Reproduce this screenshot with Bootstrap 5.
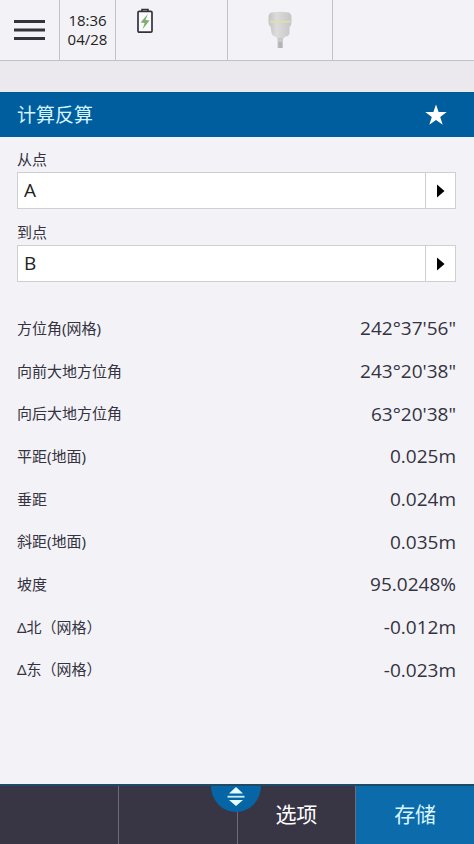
<!DOCTYPE html>
<html lang="zh-CN">
<head>
<meta charset="utf-8">
<meta name="viewport" content="width=device-width, initial-scale=1">
<title>计算反算</title>
<link href="https://cdn.jsdelivr.net/npm/bootstrap@5.3.0/dist/css/bootstrap.min.css" rel="stylesheet">
<style>
  body { font-family: "Open Sans", "Noto Sans CJK SC", sans-serif; background: #f3f2f7; color: #34333f; }
  button { border: 0; background: transparent; padding: 0; color: inherit; }
  svg { display: block; }
  .status-bar { height: 61px; border-bottom: 1px solid #c3c2c7; }
  .status-cell { border-right: 1px solid #c3c2c7; }
  .cell-menu { flex: 0 0 60px; }
  .cell-clock { flex: 0 0 56px; font-size: 15px; line-height: 19px; color: #222; }
  .cell-power { flex: 0 0 112px; padding: 8px 0 0 20px; }
  .cell-antenna { flex: 0 0 105px; padding-top: 11px; }
  .notice-strip { height: 31px; background: #ebe9ee; }
  .title-bar { height: 45px; padding: 0 27px 0 17px; background: #005e9e; border-top: 1px solid #005a86; color: #d6f4ff; }
  .title-bar h1 { font-size: 19px; line-height: 28px; }
  .page-body { padding: 12px 18px 0 17px; }
  .point-label { font-size: 15px; line-height: 20px; margin-bottom: 3px; }
  .point-field { height: 37px; border: 1px solid #cfced3; background: #fff; margin-bottom: 13px; }
  .point-field input { border: 0; min-width: 0; padding: 0 6px; font-size: 19px; color: #222; background: transparent; outline-offset: -1px; }
  .point-field button { flex: 0 0 30px; border-left: 1px solid #cfced3; }
  .results { min-height: 384px; margin-top: 25px; }
  .results dt { font-family: "Noto Sans", "Noto Sans CJK SC", sans-serif; font-size: 15px; font-weight: 400; }
  .results dd { font-size: 19px; line-height: 28px; }
  .softkeys { height: 60px; background: #383545; border-top: 2px solid #1f4a66; color: #fff; font-size: 21px; }
  .softkeys .softkey { flex: 1 1 0; border-right: 1px solid #6d6b77; }
  .softkeys .softkey-store { background: #0c6bab; border-right: 0; color: #d9f6ff; }
  .drawer-handle { left: 50%; top: 0; width: 50px; height: 26px; margin-left: -26px; }
</style>
<script src="https://cdn.jsdelivr.net/npm/bootstrap@5.3.0/dist/js/bootstrap.bundle.min.js"></script>
</head>
<body>
<div class="d-flex flex-column min-vh-100">
  <header>
    <div class="status-bar d-flex">
      <button type="button" class="status-cell cell-menu d-flex align-items-center justify-content-center" aria-label="菜单">
        <svg width="32" height="22" viewBox="0 0 32 22"><path d="M0 2.500h31M0 11h31M0 19.500h31" stroke="#34333c" stroke-width="3"/></svg>
      </button>
      <div class="status-cell cell-clock d-flex flex-column align-items-center justify-content-center">
        <span>18:36</span><span>04/28</span>
      </div>
      <div class="status-cell cell-power">
        <svg width="18" height="26" viewBox="0 0 18 26">
          <path d="M6 3V1.500h6V3" fill="none" stroke="#33323a" stroke-width="1.600"/>
          <rect x="2" y="3.400" width="14" height="20.800" rx="1.200" fill="#fafafc" stroke="#33323a" stroke-width="1.700"/>
          <path d="M11.800 6L4.600 14.400l4 .6-2 6.200 7-8.600-4-.6z" fill="#82ad74"/>
        </svg>
      </div>
      <div class="status-cell cell-antenna d-flex justify-content-center">
        <svg width="26" height="38" viewBox="0 0 26 38">
          <defs>
            <linearGradient id="shell"><stop offset="0" stop-color="#c4c4c4"/><stop offset=".35" stop-color="#dcdcdc"/><stop offset="1" stop-color="#c6c6c8"/></linearGradient>
          </defs>
          <path d="M4.500 1.500Q13 .2 21.500 1.500 24.300 2 24.500 6v6q-.4 3-2 4v6q0 3-4.500 3.800l-1.500 1.700h-6.500l-1.500-1.800q-3.500-1-4-4.200l-1-6q-2-1-2-4V6q0-4 3-4.500z" fill="url(#shell)"/>
          <path d="M3 10.400q10 .9 20.500 0" stroke="#e1e2a2" stroke-width="1.500" fill="none"/>
          <path d="M10.500 27h5.500v10h-5.500z" fill="#c9c9ca"/>
          <path d="M11.500 31h3.500v6h-3.500z" fill="#b3b3b5"/>
        </svg>
      </div>
    </div>
    <div class="notice-strip"></div>
    <div class="title-bar d-flex align-items-center justify-content-between">
      <h1 class="m-0 fw-normal">计算反算</h1>
      <button type="button" aria-label="收藏">
        <svg width="22" height="22" viewBox="0 0 22 22"><path d="M11 .5l2.600 7.600h8.100l-6.500 4.800 2.500 7.800L11 16l-6.700 4.700 2.500-7.800L.3 8.100h8.100z" fill="#fff"/></svg>
      </button>
    </div>
  </header>

  <main class="page-body flex-grow-1">
    <form>
      <label class="point-label d-block" for="from-point">从点</label>
      <div class="point-field d-flex">
        <input class="flex-grow-1" type="text" id="from-point" value="A">
        <button type="button" class="d-flex align-items-center justify-content-center" aria-label="选择从点">
          <svg width="9" height="14" viewBox="0 0 9 14"><path d="M1 .5v13L8.500 7z" fill="#000"/></svg>
        </button>
      </div>
      <label class="point-label d-block" for="to-point">到点</label>
      <div class="point-field d-flex">
        <input class="flex-grow-1" type="text" id="to-point" value="B">
        <button type="button" class="d-flex align-items-center justify-content-center" aria-label="选择到点">
          <svg width="9" height="14" viewBox="0 0 9 14"><path d="M1 .5v13L8.500 7z" fill="#000"/></svg>
        </button>
      </div>
    </form>

    <dl class="results d-flex flex-column mb-0">
      <div class="d-flex flex-fill align-items-center justify-content-between"><dt>方位角(网格)</dt><dd class="m-0">242°37'56"</dd></div>
      <div class="d-flex flex-fill align-items-center justify-content-between"><dt>向前大地方位角</dt><dd class="m-0">243°20'38"</dd></div>
      <div class="d-flex flex-fill align-items-center justify-content-between"><dt>向后大地方位角</dt><dd class="m-0">63°20'38"</dd></div>
      <div class="d-flex flex-fill align-items-center justify-content-between"><dt>平距(地面)</dt><dd class="m-0">0.025m</dd></div>
      <div class="d-flex flex-fill align-items-center justify-content-between"><dt>垂距</dt><dd class="m-0">0.024m</dd></div>
      <div class="d-flex flex-fill align-items-center justify-content-between"><dt>斜距(地面)</dt><dd class="m-0">0.035m</dd></div>
      <div class="d-flex flex-fill align-items-center justify-content-between"><dt>坡度</dt><dd class="m-0">95.0248%</dd></div>
      <div class="d-flex flex-fill align-items-center justify-content-between"><dt>Δ北（网格）</dt><dd class="m-0">-0.012m</dd></div>
      <div class="d-flex flex-fill align-items-center justify-content-between"><dt>Δ东（网格）</dt><dd class="m-0">-0.023m</dd></div>
    </dl>
  </main>

  <footer class="softkeys d-flex position-relative">
    <button type="button" class="softkey" aria-label="空白键一"></button>
    <button type="button" class="softkey" aria-label="空白键二"></button>
    <button type="button" class="softkey">选项</button>
    <button type="button" class="softkey softkey-store">存储</button>
    <button type="button" class="drawer-handle position-absolute" aria-label="展开">
      <svg width="50" height="26" viewBox="0 0 50 26">
        <path d="M0 0h50A25 26 0 0 1 0 0z" fill="#0565a5"/>
        <path d="M25 1l7 6.500H18zM25 20l7-6H18z" fill="#e4fcff"/>
        <path d="M16.500 10.700h17" stroke="#c8f0fa" stroke-width="1.800"/>
      </svg>
    </button>
  </footer>
</div>
</body>
</html>
